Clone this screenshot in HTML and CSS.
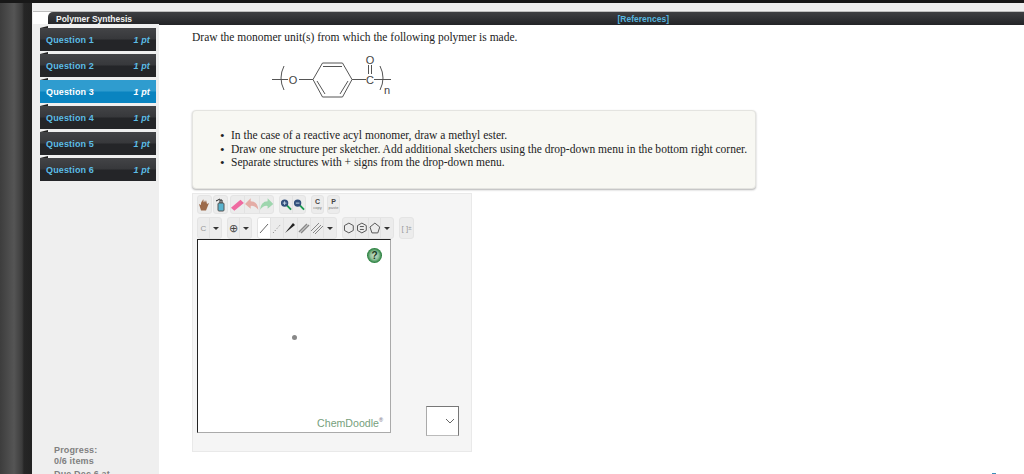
FILE: index.html
```html
<!DOCTYPE html>
<html lang="en">
<head>
<meta charset="utf-8">
<title>Polymer Synthesis</title>
<link rel="stylesheet" href="styles.css">
</head>
<body>
<div class="topstrip"></div>
<div class="shell">
  <div class="gutter"></div>
  <div class="panel">
    <div class="panel-light"></div>
    <header class="titlebar"><span class="title">Polymer Synthesis</span><a class="refs">[References]</a></header>
    <div class="columns">
      <nav class="sidebar">
        <div class="q"><span>Question 1</span><i>1 pt</i></div>
        <div class="q"><span>Question 2</span><i>1 pt</i></div>
        <div class="q active"><span>Question 3</span><i>1 pt</i></div>
        <div class="q"><span>Question 4</span><i>1 pt</i></div>
        <div class="q"><span>Question 5</span><i>1 pt</i></div>
        <div class="q"><span>Question 6</span><i>1 pt</i></div>
        <div class="progress">Progress:<br>0/6 items<p>Due Dec 6 at</p></div>
      </nav>
      <main class="content">
        <p class="prompt">Draw the monomer unit(s) from which the following polymer is made.</p>
        <svg class="polymer" width="130" height="56" viewBox="265 52 130 56" fill="none" stroke="#555" stroke-width="1">
          <path d="M272 79.500H288M284 66Q278 78 284 90M299 79.500H313M313 79.500L322.500 63H342.500L352 79.500L342.500 97H322.500ZM323 66.500H342M348 81L340 94M317 81L325 94M352 79.500H366M374 79.500H391M380 66Q386 78 380 90M368.500 65V74M371.500 65V74"/>
          <text x="293" y="83.500" class="atom">O</text>
          <text x="370" y="83.500" class="atom">C</text>
          <text x="370" y="64" class="atom">O</text>
          <text x="387" y="94" class="atom">n</text>
        </svg>
        <section class="notes">
          <ul>
            <li>In the case of a reactive acyl monomer, draw a methyl ester.</li>
            <li>Draw one structure per sketcher. Add additional sketchers using the drop-down menu in the bottom right corner.</li>
            <li>Separate structures with + signs from the drop-down menu.</li>
          </ul>
        </section>
        <section class="sketcher">
          <div class="tools tools-a">
            <div class="grp w15"><b class="tb"><svg width="13" height="14" viewBox="0 0 13 14"><path d="M3 12.500L1 6l2 1V3l1 2V1.500l1.500 3V1l1.500 3.500 1-2.500 1 4 2-1-2 5-1 2.500z" fill="#9c6a4a"/></svg></b></div>
            <div class="grp w15"><b class="tb"><svg width="11" height="15" viewBox="0 0 11 15"><rect x="3" y="6" width="6" height="8" rx="1" fill="#5ab4cf" stroke="#555"/><path d="M5 6V3h2v3M1 4l4-2" stroke="#222" fill="none"/></svg></b></div>
            <div class="grp w44 gap-e">
              <b class="tb"><svg width="14" height="14" viewBox="0 0 14 14"><path d="M0 10L10 1.500 13.500 5 3.500 13z" fill="#ef6aa0"/></svg></b>
              <b class="tb"><svg width="14" height="13" viewBox="0 0 14 13"><path d="M0 6L6 0v3Q13 3 14 12 10 7 6 8v3z" fill="#e4aca6"/></svg></b>
              <b class="tb"><svg width="14" height="13" viewBox="0 0 14 13"><path d="M14 6L8 0v3Q1 3 0 12 4 7 8 8v3z" fill="#9ed6ae"/></svg></b>
            </div>
            <div class="grp w27 gap-a">
              <b class="tb"><svg width="13" height="13" viewBox="0 0 13 13"><path d="M7.500 7.500l4.500 4.500" stroke="#1a9a50" stroke-width="2"/><circle cx="5" cy="5" r="4" fill="#32507c"/><path d="M3 5h4M5 3v4" stroke="#cde"/></svg></b>
              <b class="tb"><svg width="13" height="13" viewBox="0 0 13 13"><path d="M7.500 7.500l4.500 4.500" stroke="#1a9a50" stroke-width="2"/><circle cx="5" cy="5" r="4" fill="#32507c"/><path d="M3 5h4" stroke="#cde"/></svg></b>
            </div>
            <div class="grp w13 gap-b"><b class="tb tb-txt"><em>C</em><small>copy</small></b></div>
            <div class="grp w13 gap-c"><b class="tb tb-txt"><em>P</em><small>paste</small></b></div>
          </div>
          <div class="tools tools-b">
            <div class="grp w25"><b class="tb light">C</b><b class="tb caret"></b></div>
            <div class="grp w25"><b class="tb">⊕</b><b class="tb caret"></b></div>
            <div class="grp w80">
              <b class="tb on"><svg width="12" height="12" viewBox="0 0 12 12"><path d="M2 11L10 2" stroke="#666"/></svg></b>
              <b class="tb"><svg width="12" height="12" viewBox="0 0 12 12"><path d="M2 11L10 2" stroke="#777" stroke-dasharray="1 2"/></svg></b>
              <b class="tb"><svg width="12" height="12" viewBox="0 0 12 12"><path d="M1 11L9 1 11 3z" fill="#222"/></svg></b>
              <b class="tb"><svg width="12" height="12" viewBox="0 0 12 12"><path d="M1 10L9 2M3 11L11 3" stroke="#888" stroke-width="1.500"/></svg></b>
              <b class="tb"><svg width="12" height="12" viewBox="0 0 12 12"><path d="M0 9L8 1M2 11L10 3M4 12L12 4" stroke="#888"/></svg></b>
              <b class="tb caret"></b>
            </div>
            <div class="grp w52">
              <b class="tb"><svg width="12" height="12" viewBox="0 0 12 12"><path d="M6 1l4.500 2.500v5L6 11 1.500 8.500v-5z" fill="none" stroke="#555"/></svg></b>
              <b class="tb"><svg width="12" height="12" viewBox="0 0 12 12"><path d="M6 1l4.500 2.500v5L6 11 1.500 8.500v-5z" fill="none" stroke="#555"/><path d="M4 4.500h4M4 7.500h4" stroke="#555"/></svg></b>
              <b class="tb"><svg width="12" height="12" viewBox="0 0 12 12"><path d="M6 1l5 4-2 6H3L1 5z" fill="none" stroke="#555"/></svg></b>
              <b class="tb caret"></b>
            </div>
            <div class="grp w15"><b class="tb light">[ ]<sup>±</sup></b></div>
          </div>
          <div class="stage">
            <div class="canvas">
              <span class="help">?</span>
              <span class="dot"></span>
              <span class="brand">ChemDoodle<sup>®</sup></span>
            </div>
            <div class="picker"><svg width="10" height="6" viewBox="0 0 10 6"><path d="M1 1l4 4 4-4" fill="none" stroke="#666"/></svg></div>
          </div>
        </section>
      </main>
    </div>
  </div>
</div>
<span class="cornermark"></span>
</body>
</html>
```

FILE: styles.css
```css
* { box-sizing: border-box; }
html, body { margin: 0; height: 474px; overflow: hidden; }
body { position: relative; background: #fff; font-family: "Liberation Sans", Arial, sans-serif; }
.topstrip { height: 3px; background: #181818; }
.shell { display: flex; height: 471px; }
.gutter {
  width: 33px;
  flex: none;
  background: linear-gradient(90deg, #3d3d3d 0, #555 14px, #3c3c3c 22px, #262626 24px, #222 32px, #eee 32px);
}
.panel { flex: 1; min-width: 0; display: flex; flex-direction: column; background: #fff; }
.panel-light { height: 9px; flex: none; background: #efefef; border-bottom: 1px solid #bdbdbd; }
.titlebar {
  height: 13px;
  flex: none;
  margin-left: 15px;
  display: flex;
  align-items: center;
  justify-content: space-between;
  padding: 0 355px 0 8px;
  background: linear-gradient(#3e3f42, #232427);
  border-top-left-radius: 5px;
  font-size: 8.500px;
  font-weight: 700;
}
.title { color: #f2f2f2; }
.refs { color: #56b5df; }
.columns { flex: 1; display: flex; min-height: 0; }
.sidebar {
  width: 126px;
  flex: none;
  background: #efefef;
  margin-top: -1px;
  padding: 4px 3px 0 7px;
  display: flex;
  flex-direction: column;
  gap: 3px;
  overflow: hidden;
}
.q {
  position: relative;
  height: 23px;
  flex: none;
  display: flex;
  align-items: center;
  justify-content: space-between;
  padding: 0 6px;
  background: linear-gradient(#434447 0, #37383b 48%, #242528 52%, #242528 100%);
  font-size: 9px;
  font-weight: 700;
  color: #5cbde6;
  letter-spacing: .15px;
}
.q::before {
  content: "";
  position: absolute;
  left: 0;
  top: -2px;
  width: 8px;
  height: 2px;
  background: #222;
  clip-path: polygon(0 100%, 100% 0, 100% 100%);
}
.q i { font-size: 9px; }
.q.active { background: linear-gradient(#2f9ccf 0, #2f9ccf 48%, #0a84c0 52%, #0a84c0 100%); color: #fff; }
.progress {
  flex: none;
  margin: 261px 0 0 14px;
  color: #808080;
  font-size: 9px;
  font-weight: 700;
  line-height: 11px;
  letter-spacing: .15px;
}
.progress p { margin: 2px 0 0; }
.content { flex: 1; min-width: 0; padding: 6px 0 0 33px; font-family: "Liberation Serif", "Times New Roman", serif; color: #222; }
.prompt { margin: 0; font-size: 11.500px; line-height: 13px; }
.polymer { display: block; margin: 8px 0 0 73px; }
.atom { font: 400 11px "Liberation Sans", Arial, sans-serif; fill: #444; stroke: none; text-anchor: middle; }
.notes {
  width: 564px;
  height: 79px;
  margin-top: 2px;
  display: flex;
  align-items: center;
  background: #f8f8f3;
  border: 1px solid #e4e4e0;
  border-radius: 4px;
  box-shadow: 0 1px 2px rgba(0,0,0,.3);
}
.notes ul { margin: 0; padding: 0 0 0 38px; list-style: none; font-size: 11.530px; line-height: 13.500px; }
.notes li { position: relative; }
.notes li::before { content: "•"; position: absolute; left: -11px; top: 0; font-size: 13px; }
.sketcher {
  width: 280px;
  height: 259px;
  margin-top: 4px;
  padding: 1px 0 0 4px;
  background: #f5f5f5;
  border: 1px solid #e9e9e9;
}
.tools { display: flex; }
.tools-a { height: 19px; gap: 1px; }
.tools-b { height: 22px; margin-top: 3px; gap: 5px; }
.grp { display: flex; flex: none; background: #ececec; border: 1px solid #e4e4e4; border-radius: 3px; overflow: hidden; }
.w13 { width: 13px; }
.w15 { width: 15px; }
.w25 { width: 25px; }
.w27 { width: 27px; }
.w44 { width: 44px; }
.w52 { width: 52px; }
.w80 { width: 80px; }
.gap-e { margin-left: 1px; }
.gap-a { margin-left: 4px; }
.gap-b { margin-left: 4px; }
.gap-c { margin-left: 2px; }
.tb {
  flex: 1 1 0;
  min-width: 0;
  display: flex;
  align-items: center;
  justify-content: center;
  font-weight: 400;
  font-size: 11px;
  color: #444;
  font-family: "Liberation Sans", Arial, sans-serif;
}
.tb + .tb { border-left: 1px solid #e2e2e2; }
.tb.light { color: #999; font-size: 8px; white-space: nowrap; }
.tb sup { font-size: 6px; }
.tb.on { background: #fff; }
.caret::after { content: ""; border: 3px solid transparent; border-top: 3px solid #333; border-bottom: 0; }
.tb-txt { flex-direction: column; line-height: 6px; }
.tb-txt em { font-style: normal; font-weight: 700; font-size: 7px; color: #444; }
.tb-txt small { font-size: 4px; color: #777; }
.stage { display: flex; align-items: flex-end; }
.canvas {
  position: relative;
  width: 194px;
  height: 194px;
  flex: none;
  background: #fff;
  border: 1px solid #aaa;
  border-top-color: #222;
  border-left-color: #222;
}
.help {
  position: absolute;
  top: 8px;
  right: 8px;
  width: 15px;
  height: 15px;
  display: flex;
  align-items: center;
  justify-content: center;
  border-radius: 50%;
  background: radial-gradient(circle, #cfe3cf 0, #8fc09a 40%, #1f7a35 70%);
  color: #1c3a22;
  font: 700 10px "Liberation Sans", Arial, sans-serif;
}
.dot { position: absolute; left: 94px; top: 95px; width: 5px; height: 5px; border-radius: 50%; background: #888; }
.brand { position: absolute; right: 7px; bottom: 3px; color: #76a07c; font: 400 10.600px "Liberation Sans", Arial, sans-serif; }
.brand sup { font-size: 5.500px; line-height: 0; color: #667; }
.picker {
  width: 33px;
  height: 30px;
  flex: none;
  margin: 0 0 -3px 35px;
  display: flex;
  align-items: center;
  justify-content: flex-end;
  padding-right: 3px;
  background: #fff;
  border: 1px solid #777;
  border-bottom-color: #bbb;
  border-left-color: #aaa;
}
.cornermark { position: absolute; left: 992px; top: 473px; width: 4px; height: 1px; background: #3a8fb8; }
```
